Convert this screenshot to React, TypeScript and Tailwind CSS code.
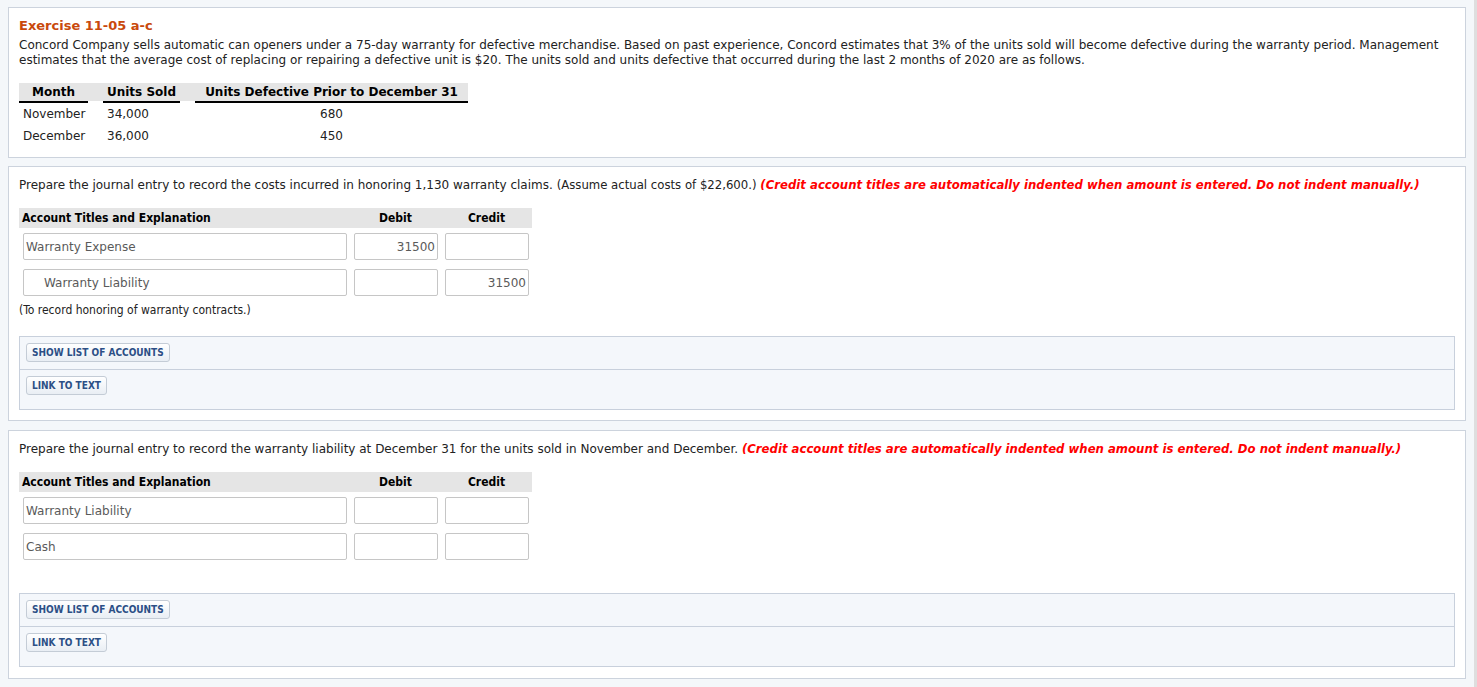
const verdana = "font-['DejaVu_Sans',Verdana,sans-serif]";
const tahoma = "font-['DejaVu_Sans_Condensed','Liberation_Sans',Tahoma,sans-serif]";

function Field({ value, right, indent, wide }: { value?: string; right?: boolean; indent?: boolean; wide?: boolean }) {
  return (
    <div
      className={`flex h-[27px] items-center rounded-[2px] border border-[#c6c6c6] bg-white text-[12px] text-[#5a5a5a] ${verdana} ${
        wide ? "w-[324px]" : "w-[84px]"
      } ${right ? "justify-end pr-[2px]" : "pl-[2px]"} ${indent ? "pl-[20px]" : ""}`}
    >
      {value}
    </div>
  );
}

function JournalTable({ rows }: { rows: { acct: string; debit?: string; credit?: string; indent?: boolean }[] }) {
  return (
    <div className="w-[513px]">
      <div className={`flex h-[20px] items-center bg-[#e5e5e5] text-[12px] font-bold text-black ${tahoma}`}>
        <div className="w-[331px] pl-[3px]">Account Titles and Explanation</div>
        <div className="w-[91px] text-center">Debit</div>
        <div className="w-[91px] text-center">Credit</div>
      </div>
      <div className="mt-[5px] flex flex-col gap-[9px] pl-[4px]">
        {rows.map((r, i) => (
          <div key={i} className="flex gap-[7px]">
            <Field value={r.acct} wide indent={r.indent} />
            <Field value={r.debit} right />
            <Field value={r.credit} right />
          </div>
        ))}
      </div>
    </div>
  );
}

function Btn({ label }: { label: string }) {
  return (
    <button
      type="button"
      className={`h-[19px] rounded-[3px] border border-[#c4ccd6] bg-gradient-to-b from-white to-[#e9eef4] px-[5px] text-[10px] font-bold leading-none text-[#2c4f86] ${tahoma}`}
    >
      {label}
    </button>
  );
}

function ButtonBox() {
  return (
    <div className="border border-[#c8d0dc] bg-[#f4f7fb]">
      <div className="flex h-[33px] items-start border-b border-[#c8d0dc] pl-[6px] pt-[6px]">
        <Btn label="SHOW LIST OF ACCOUNTS" />
      </div>
      <div className="flex h-[39px] items-start pl-[6px] pt-[6px]">
        <Btn label="LINK TO TEXT" />
      </div>
    </div>
  );
}

function Prompt({ children }: { children: React.ReactNode }) {
  return (
    <p className={`text-[12px] leading-[15px] text-[#222] ${verdana}`}>
      {children}
      <span className={`text-[13px] font-bold italic text-[#f00] ${tahoma}`}>
        (Credit account titles are automatically indented when amount is entered. Do not indent manually.)
      </span>
    </p>
  );
}

export default function App() {
  const cols = [
    { label: "Month", w: "w-[69px]" },
    { label: "Units Sold", w: "w-[77px]" },
    { label: "Units Defective Prior to December 31", w: "w-[273px]" },
  ];
  const data = [
    ["November", "34,000", "680"],
    ["December", "36,000", "450"],
  ];

  return (
    <div className="flex min-h-[687px] bg-[#f4f7fa]">
      <div className="flex flex-1 flex-col pb-[8px] pl-[8px] pr-[8px] pt-[7px]">
        <section className="border border-[#ccd3dd] bg-white px-[10px] pb-[10px] pt-[10px]">
          <h1 className={`text-[13px] font-bold leading-[16px] text-[#c9490c] ${verdana}`}>Exercise 11-05 a-c</h1>
          <p className={`mt-[4px] text-[12px] leading-[15px] text-[#222] ${verdana}`}>
            Concord Company sells automatic can openers under a 75-day warranty for defective merchandise. Based on past
            experience, Concord estimates that 3% of the units sold will become defective during the warranty period.
            Management estimates that the average cost of replacing or repairing a defective unit is $20. The units sold
            and units defective that occurred during the last 2 months of 2020 are as follows.
          </p>
          <div className={`mt-[15px] w-[449px] text-[12px] text-[#222] ${verdana}`}>
            <div className="flex h-[18px] items-end gap-[15px] bg-[#e5e5e5]">
              {cols.map((c) => (
                <div key={c.label} className={`${c.w} pb-[1px] text-center font-bold leading-[15px] text-black`}>
                  {c.label}
                </div>
              ))}
            </div>
            <div className="flex gap-[15px]">
              {cols.map((c) => (
                <div key={c.label} className={`${c.w} h-[2px] bg-black`} />
              ))}
            </div>
            {data.map((row) => (
              <div key={row[0]} className="flex h-[22px] items-center gap-[15px]">
                <div className="w-[69px] pl-[4px]">{row[0]}</div>
                <div className="w-[77px] pl-[4px]">{row[1]}</div>
                <div className="w-[273px] text-center">{row[2]}</div>
              </div>
            ))}
          </div>
        </section>

        <section className="mt-[8px] border border-[#ccd3dd] bg-white px-[10px] pb-[10px] pt-[10px]">
          <Prompt>
            Prepare the journal entry to record the costs incurred in honoring 1,130 warranty claims.{" "}
            <span className={`text-[13px] ${tahoma}`}>(Assume actual costs of $22,600.)</span>{" "}
          </Prompt>
          <div className="mt-[15px]">
            <JournalTable
              rows={[
                { acct: "Warranty Expense", debit: "31500" },
                { acct: "Warranty Liability", credit: "31500", indent: true },
              ]}
            />
          </div>
          <p className={`mt-[7px] text-[12px] leading-[15px] text-[#222] ${tahoma}`}>(To record honoring of warranty contracts.)</p>
          <div className="mt-[18px]">
            <ButtonBox />
          </div>
        </section>

        <section className="mt-[9px] border border-[#ccd3dd] bg-white px-[10px] pb-[11px] pt-[10px]">
          <Prompt>
            Prepare the journal entry to record the warranty liability at December 31 for the units sold in November and
            December.{" "}
          </Prompt>
          <div className="mt-[15px]">
            <JournalTable rows={[{ acct: "Warranty Liability" }, { acct: "Cash" }]} />
          </div>
          <div className="mt-[33px]">
            <ButtonBox />
          </div>
        </section>
      </div>
      <div className="w-[3px] bg-[#dedede]" />
    </div>
  );
}
